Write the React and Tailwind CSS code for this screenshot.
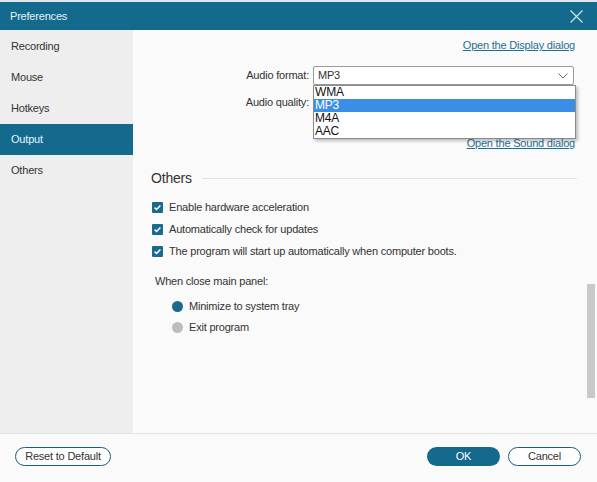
import React from "react";

const font = { fontFamily: '"Liberation Sans", Arial, sans-serif', letterSpacing: "-0.2px" };

function Check({ label }) {
  return (
    <div className="flex items-center h-[22px]">
      <div className="w-[11px] h-[11px] bg-[#1a6a8c] rounded-[1px] flex items-center justify-center">
        <svg width="9" height="9" viewBox="0 0 9 9">
          <path d="M1.6 4.6 L3.6 6.5 L7.4 2.4" stroke="white" strokeWidth="1.5" fill="none" />
        </svg>
      </div>
      <span className="ml-[6px] text-[11px] text-[#333]">{label}</span>
    </div>
  );
}

function Radio({ label, on }) {
  return (
    <div className="flex items-center h-[21px]">
      <div className={"w-[11px] h-[11px] rounded-full " + (on ? "bg-[#1a6a8c]" : "bg-[#bdbdbd]")} />
      <span className="ml-[6px] text-[11px] text-[#333]">{label}</span>
    </div>
  );
}

export default function App() {
  const nav = ["Recording", "Mouse", "Hotkeys", "Output", "Others"];
  return (
    <div className="w-[597px] h-[482px] flex flex-col bg-[#fafafa] overflow-hidden" style={font}>
      <div className="h-[2px] bg-[#dbe7ec]" />
      <div className="h-[28px] bg-[#136a8c] flex items-center justify-between pl-[10px] pr-[14px] shrink-0">
        <span className="text-[11px] text-[#e6f3f8]">Preferences</span>
        <svg width="13" height="13" viewBox="0 0 13 13">
          <path d="M0.5 0.5 L12.5 12.5 M12.5 0.5 L0.5 12.5" stroke="#cfe6ef" strokeWidth="1.2" />
        </svg>
      </div>
      <div className="flex flex-1 min-h-0 border-b border-[#e4e4e4]">
        <div className="w-[133px] bg-[#eeeeee] flex flex-col pt-[1px]">
          {nav.map((n) => (
            <div
              key={n}
              className={
                "h-[31px] flex items-center pl-[11px] text-[11px] " +
                (n === "Output" ? "bg-[#136a8c] text-[#e3f5fd]" : "text-[#333]")
              }
            >
              {n}
            </div>
          ))}
        </div>
        <div className="flex-1 relative">
          <div className="flex justify-end pr-[22px] pt-[7px] h-[23px]">
            <span className="text-[11px] leading-[16px] text-[#1f6f93] underline">Open the Display dialog</span>
          </div>
          <div className="flex items-center mt-[13px] h-[19px]">
            <span className="w-[180px] text-right pr-[4px] text-[11px] text-[#333]">Audio format:</span>
            <div className="relative w-[261px] h-[19px] border border-[#9a9a9a] rounded-[2px] bg-white flex items-center justify-between pl-[4px] pr-[5px]">
              <span className="text-[11px] text-[#333]">MP3</span>
              <svg width="10" height="6" viewBox="0 0 10 6">
                <path d="M0.5 0.5 L5 5 L9.5 0.5" stroke="#666" strokeWidth="1" fill="none" />
              </svg>
              <div className="absolute left-[-1px] top-[18px] w-[263px] bg-white border border-[#8a8a8a] shadow-[2px_2px_3px_rgba(0,0,0,0.25)] z-10 flex flex-col">
                {["WMA", "MP3", "M4A", "AAC"].map((o) => (
                  <div
                    key={o}
                    className={
                      "h-[13px] leading-[13px] pl-[1px] text-[12px] " +
                      (o === "MP3" ? "bg-[#3b8ee6] text-white" : "text-[#111]")
                    }
                  >
                    {o}
                  </div>
                ))}
              </div>
            </div>
          </div>
          <div className="flex items-center mt-[10px] h-[14px]">
            <span className="w-[180px] text-right pr-[4px] text-[11px] text-[#333]">Audio quality:</span>
          </div>
          <div className="flex justify-end pr-[22px] mt-[26px] h-[16px]">
            <span className="text-[11px] leading-[16px] text-[#1f6f93] underline">Open the Sound dialog</span>
          </div>
          <div className="flex items-center pl-[18px] pr-[20px] mt-[17px] h-[20px]">
            <span className="text-[14px] text-[#333]">Others</span>
            <div className="flex-1 h-px bg-[#e2e2e2] ml-[10px]" />
          </div>
          <div className="pl-[19px] mt-[8px] flex flex-col">
            <Check label="Enable hardware acceleration" />
            <Check label="Automatically check for updates" />
            <Check label="The program will start up automatically when computer boots." />
          </div>
          <div className="pl-[22px] mt-[11px] h-[16px] leading-[16px] text-[11px] text-[#333]">When close main panel:</div>
          <div className="pl-[39px] mt-[7px] flex flex-col">
            <Radio label="Minimize to system tray" on />
            <Radio label="Exit program" />
          </div>
          <div className="absolute right-[2px] top-[254px] w-[8px] h-[114px] bg-[#c9c9c9]" />
        </div>
      </div>
      <div className="h-[48px] shrink-0 flex items-center justify-between px-[15px] pb-[4px]">
        <button className="h-[19px] w-[96px] rounded-full border-[1.5px] border-[#1b5d7c] text-[11px] text-[#333] bg-white flex items-center justify-center">
          Reset to Default
        </button>
        <div className="flex gap-[8px] pr-[1px]">
          <button className="h-[19px] w-[73px] rounded-full bg-[#136a8c] text-[11px] text-white flex items-center justify-center">
            OK
          </button>
          <button className="h-[19px] w-[73px] rounded-full border-[1.5px] border-[#1b5d7c] text-[11px] text-[#333] bg-white flex items-center justify-center">
            Cancel
          </button>
        </div>
      </div>
    </div>
  );
}
